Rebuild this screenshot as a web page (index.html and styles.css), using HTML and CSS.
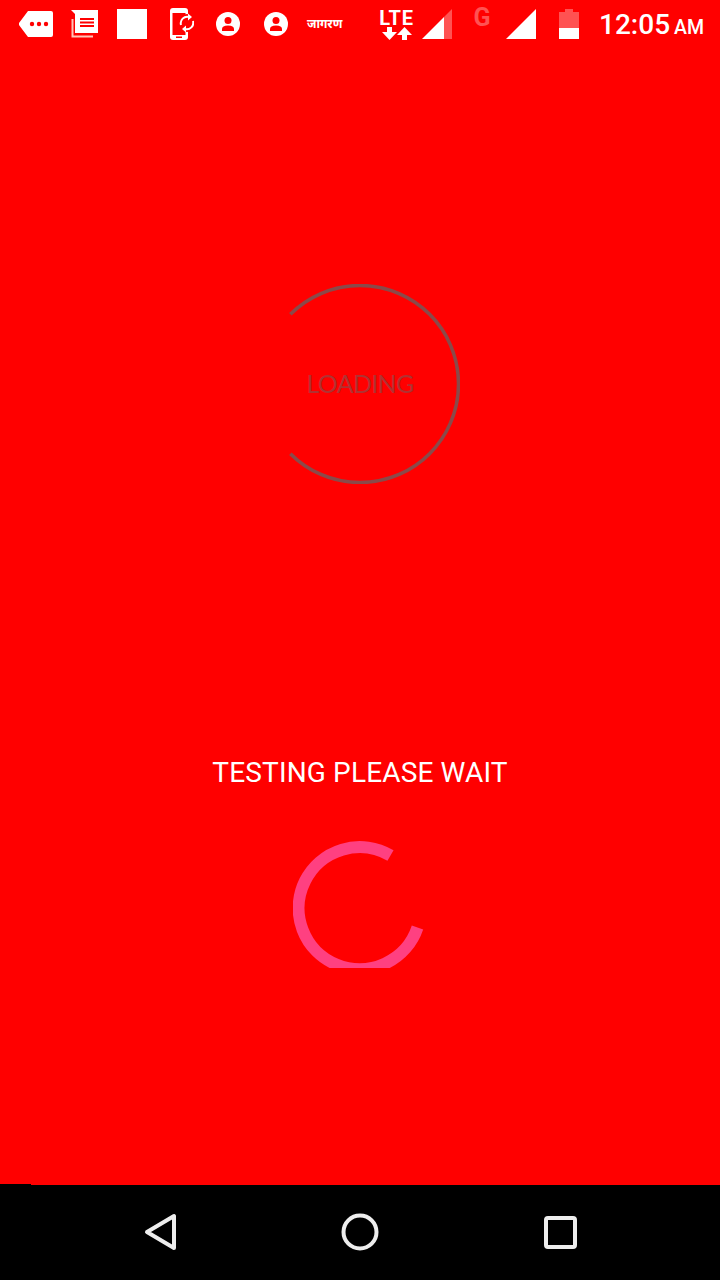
FILE: index.html
```html
<!DOCTYPE html>
<html lang="en">
<head>
<meta charset="utf-8">
<title>Testing</title>
<link rel="stylesheet" href="styles.css">
</head>
<body>
<div class="app">
  <header class="status">
    <svg class="i-tag" viewBox="0 0 34 26"><path class="w" d="M9 0H32a2 2 0 0 1 2 2V24a2 2 0 0 1-2 2H9L0 14Q-1 13 0 12Z"/><circle class="r" cx="13" cy="13" r="2.2"/><circle class="r" cx="20" cy="13" r="2.2"/><circle class="r" cx="27" cy="13" r="2.2"/></svg>
    <svg class="i-news" viewBox="0 0 27 28"><path class="w" d="M0 0H27V23H4V4Z"/><path class="r" d="M9 8H23V10H9ZM9 11.500H23V13.500H9ZM9 15H23V17H9Z"/><path class="back" d="M1.500 9V26.500H22"/></svg>
    <div class="i-square"></div>
    <svg class="i-phone" viewBox="0 0 24 32"><rect class="w" width="18" height="32" rx="3"/><rect class="r" x="2.500" y="5" width="13" height="22"/><rect class="r" x="6" y="28.500" width="6" height="1.500"/><circle class="r" cx="17" cy="15" r="9"/><path class="sync" d="M11 17A6.500 6.500 0 0 1 19 9M23 13A6.500 6.500 0 0 1 15 21"/><path class="w" d="M18 5.500L22 9L18 12.500ZM16 17.500L12 21L16 24.500Z"/></svg>
    <svg class="i-person" viewBox="0 0 24 24"><circle class="w" cx="12" cy="12" r="12"/><circle class="r" cx="12" cy="8.500" r="3.500"/><path class="r" d="M6 19V17Q6 13.500 12 13.500T18 17V19Z"/></svg>
    <svg class="i-person gap-person" viewBox="0 0 24 24"><circle class="w" cx="12" cy="12" r="12"/><circle class="r" cx="12" cy="8.500" r="3.500"/><path class="r" d="M6 19V17Q6 13.500 12 13.500T18 17V19Z"/></svg>
    <span class="hindi">जागरण</span>
    <div class="lte">
      <span class="lte-text">LTE</span>
      <svg class="lte-arrows" viewBox="0 0 35 13"><path class="w" d="M8 0H13V5H18L10.500 13L3 5H8ZM23 13H28V8H33L25.500 0L18 8H23Z"/></svg>
    </div>
    <svg class="i-signal" viewBox="0 0 30 30"><path class="w" d="M0 30L22 8V30Z"/><path class="dim" d="M22 8L30 0V30H22Z"/></svg>
    <span class="g">G</span>
    <svg class="i-signal gap-signal" viewBox="0 0 30 30"><path class="w" d="M0 30L30 0V30Z"/></svg>
    <svg class="i-battery" viewBox="0 0 20 30"><path class="dim" d="M6 0H14V3H20V19H0V3H6Z"/><rect class="w" y="19" width="20" height="11"/></svg>
    <div class="clock">12:05<span class="ampm">AM</span></div>
  </header>

  <main class="content">
    <div class="loader">
      <svg class="loader-ring" viewBox="0 0 200 200"><path d="M30.350 30.350A98.500 98.500 0 1 1 30.350 169.650"/></svg>
      <span class="loader-text">LOADING</span>
    </div>
    <p class="message">TESTING PLEASE WAIT</p>
    <svg class="spinner" viewBox="0 0 134 127"><path d="M97.500 14.500A61 61 0 1 0 124.500 86.500"/></svg>
  </main>

  <footer class="footer">
    <div class="notch"></div>
    <nav class="nav">
      <svg class="nav-back" viewBox="0 0 36 40"><path d="M4 20L31 4V36Z"/></svg>
      <svg class="nav-home" viewBox="0 0 40 40"><circle cx="20" cy="20" r="16.500"/></svg>
      <svg class="nav-recent" viewBox="0 0 36 36"><rect x="5" y="4" width="29" height="29" rx="2"/></svg>
    </nav>
  </footer>
</div>
</body>
</html>
```
FILE: styles.css
```css
html, body {
  margin: 0;
  padding: 0;
}

.app {
  width: 720px;
  height: 1280px;
  display: flex;
  flex-direction: column;
  background: #ff0000;
  overflow: hidden;
  font-family: Roboto, "Liberation Sans", sans-serif;
}

.status {
  height: 48px;
  flex: none;
  display: flex;
  align-items: center;
  padding-left: 19px;
  color: #fff;
}

.status svg {
  flex: none;
  display: block;
}

.w { fill: #fff; }
.r { fill: #ff0000; }
.dim { fill: #ff5252; }
.back { fill: none; stroke: #ffc4b8; stroke-width: 2; }
.sync { fill: none; stroke: #fff; stroke-width: 2; }

.i-tag { width: 34px; height: 26px; }
.i-news { width: 27px; height: 28px; margin-left: 18px; }
.i-square { width: 30px; height: 30px; margin-left: 19px; background: #fff; flex: none; }
.i-phone { width: 24px; height: 32px; margin-left: 23px; }
.i-person { width: 24px; height: 24px; margin-left: 22px; }
.gap-person { margin-left: 24px; }

.hindi {
  width: 34px;
  margin-left: 19px;
  flex: none;
  font-family: "Noto Sans", "Noto Sans CJK SC", sans-serif;
  font-size: 12px;
  font-weight: 700;
  line-height: 16px;
  white-space: nowrap;
  text-align: center;
}

.lte {
  width: 35px;
  margin-left: 38px;
  padding-top: 2px;
  flex: none;
  display: flex;
  flex-direction: column;
  align-items: center;
}

.lte-text {
  font-size: 20px;
  font-weight: 700;
  line-height: 17px;
  letter-spacing: 0.8px;
}

.lte-arrows { width: 35px; height: 13px; }

.i-signal { width: 30px; height: 30px; margin-left: 8px; }
.gap-signal { margin-left: 15px; }

.g {
  width: 18px;
  margin-left: 21px;
  margin-bottom: 13px;
  flex: none;
  color: #ff5252;
  font-size: 25px;
  font-weight: 700;
  line-height: 22px;
  text-align: center;
}

.i-battery { width: 20px; height: 30px; margin-left: 23px; }

.clock {
  margin-left: 20px;
  padding-top: 4px;
  font-size: 28px;
  font-weight: 500;
  line-height: 32px;
  white-space: nowrap;
}

.ampm {
  margin-left: 4px;
  font-size: 19.500px;
}

.content {
  flex: 1;
  display: flex;
  flex-direction: column;
  align-items: center;
  padding-top: 236px;
}

.loader {
  width: 200px;
  height: 200px;
  display: grid;
  place-items: center;
}

.loader-ring,
.loader-text {
  grid-area: 1 / 1;
}

.loader-ring {
  width: 200px;
  height: 200px;
  display: block;
}

.loader-ring path {
  fill: none;
  stroke: #8a4a4a;
  stroke-width: 3.500;
}

.loader-text {
  margin-bottom: 2px;
  font-family: Lato, sans-serif;
  font-size: 25px;
  font-weight: 400;
  letter-spacing: -0.7px;
  line-height: 30px;
  color: #b03232;
}

.message {
  margin: 273px 0 0;
  color: #fff;
  font-size: 28px;
  letter-spacing: 0.15px;
  line-height: 32px;
  white-space: nowrap;
}

.spinner {
  width: 134px;
  height: 127px;
  margin-top: 52px;
  display: block;
}

.spinner path {
  fill: none;
  stroke: #ff4081;
  stroke-width: 12;
}

.footer {
  flex: none;
  display: flex;
  flex-direction: column;
}

.notch {
  width: 31px;
  height: 1px;
  background: #000;
}

.nav {
  height: 94px;
  padding: 0 143px 1px;
  background: #000;
  display: flex;
  align-items: center;
  justify-content: space-between;
}

.nav svg {
  display: block;
}

.nav path,
.nav circle,
.nav rect {
  fill: none;
  stroke: #eeeeee;
  stroke-width: 4;
  stroke-linejoin: round;
}

.nav-back { width: 36px; height: 40px; }
.nav-home { width: 40px; height: 40px; }
.nav-recent { width: 36px; height: 36px; }
```
